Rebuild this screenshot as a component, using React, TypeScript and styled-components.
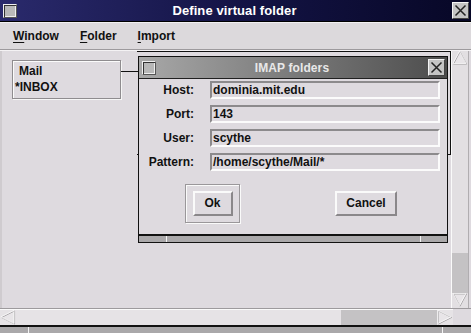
import React from "react";
import styled, { createGlobalStyle } from "styled-components";

const Global = createGlobalStyle`
  html, body {
    margin: 0;
    padding: 0;
    width: 471px;
    height: 333px;
    overflow: hidden;
    background: #dedadf;
  }
  body {
    font-family: "Liberation Sans", Arial, sans-serif;
  }
`;

const Window = styled.div`
  width: 471px;
  height: 333px;
  display: flex;
  flex-direction: column;
  background: #dedadf;
  overflow: hidden;
`;

const TitleBar = styled.div<{ dim?: boolean }>`
  height: 21px;
  flex: none;
  display: flex;
  align-items: center;
  padding: 0 2px 0 3px;
  background: ${(p) =>
    p.dim
      ? "linear-gradient(to right, #a8a8a8, #7a7a7a 50%, #4c4c4c)"
      : "linear-gradient(to right, #2a2a6c, #141446 50%, #070726)"};
  border-bottom: 1px solid ${(p) => (p.dim ? "#202020" : "#000")};
`;

const Title = styled.div<{ dim?: boolean }>`
  flex: 1;
  text-align: center;
  color: ${(p) => (p.dim ? "#e8e8e8" : "#fff")};
  font-weight: bold;
  font-size: ${(p) => (p.dim ? 12 : 13)}px;
  letter-spacing: 0.1px;
`;

const MenuButton = styled.div`
  width: 12px;
  height: 12px;
  border: 1px solid #f0f0f0;
  border-right-color: #555;
  border-bottom-color: #555;
  background: #b8b8b8;
  box-shadow: inset 1px 1px 0 #333, inset -1px -1px 0 #eee;
`;

const CloseBox = styled.div`
  width: 15px;
  height: 15px;
  background: #c4c4c4;
  border: 1px solid #f4f4f4;
  border-right-color: #444;
  border-bottom-color: #444;
  display: flex;
  align-items: center;
  justify-content: center;
`;

const CloseIcon = () => (
  <svg width="13" height="13" viewBox="0 0 13 13">
    <path d="M1.5 1.5 L11.5 11.5 M11.5 1.5 L1.5 11.5" stroke="#222" strokeWidth="1.5" />
  </svg>
);

const MenuBar = styled.div`
  height: 26px;
  flex: none;
  display: flex;
  align-items: center;
  gap: 21px;
  padding-left: 13px;
  background: #dcd9dc;
  border-top: 1px solid #f2f0f2;
  border-bottom: 1px solid #9d9a9d;
  font-size: 12px;
  font-weight: bold;
  color: #111;
`;

const MenuItem = styled.span`
  u {
    text-decoration: underline;
    text-underline-offset: 2px;
  }
`;

const Main = styled.div`
  flex: 1;
  display: flex;
  border-top: 1px solid #f4f2f4;
  padding-right: 2px;
`;

const Canvas = styled.div`
  flex: 1;
  position: relative;
  border-left: 2px solid #cfcbcf;
`;

const FolderNode = styled.div`
  position: absolute;
  left: 10px;
  top: 9px;
  width: 106px;
  height: 35px;
  border: 1px solid #8f8c8f;
  box-shadow: inset 1px 1px 0 #fbfbfb, 1px 1px 0 #f6f6f6;
  padding: 2px 0 0 1px;
  font-size: 12px;
  font-weight: bold;
  color: #111;
`;

const NodeLine = styled.div<{ indent: number }>`
  height: 16px;
  line-height: 16px;
  padding-left: ${(p) => p.indent}px;
`;

const Connector = styled.div`
  position: absolute;
  left: 119px;
  top: 20px;
  width: 17px;
  height: 1px;
  background: #111;
`;

const BackFrame = styled.div`
  position: absolute;
  left: 135px;
  top: 0px;
  width: 313px;
  height: 102px;
  border: 1px solid #111;
  border-left: none;
`;

const Dialog = styled.div`
  position: absolute;
  left: 136px;
  top: 5px;
  width: 308px;
  height: 185px;
  border: 1px solid #111;
  background: #dedadf;
  display: flex;
  flex-direction: column;
`;

const Fields = styled.div`
  display: grid;
  grid-template-columns: 55px 230px;
  column-gap: 16px;
  row-gap: 6px;
  padding-top: 2px;
`;

const Label = styled.div`
  height: 18px;
  line-height: 18px;
  text-align: right;
  font-size: 12px;
  font-weight: bold;
  color: #111;
`;

const Input = styled.div`
  height: 14px;
  line-height: 14px;
  border: 2px solid #8c8a8c;
  border-right-color: #fbfbfb;
  border-bottom-color: #fbfbfb;
  padding-left: 1px;
  font-size: 12px;
  font-weight: bold;
  color: #111;
  white-space: nowrap;
  overflow: hidden;
`;

const Buttons = styled.div`
  display: flex;
  align-items: center;
  justify-content: space-between;
  padding: 0 50px 0 46px;
  margin-top: 13px;
`;

const DefaultRing = styled.div`
  width: 53px;
  height: 37px;
  border: 1px solid #9a979a;
  box-shadow: inset 1px 1px 0 #fafafa, 1px 1px 0 #fafafa;
  display: flex;
  align-items: center;
  justify-content: center;
`;

const Button = styled.div<{ w: number }>`
  width: ${(p) => p.w - 4}px;
  height: 21px;
  line-height: 21px;
  text-align: center;
  border: 2px solid #fafafa;
  border-right-color: #8a878a;
  border-bottom-color: #8a878a;
  font-size: 12px;
  font-weight: bold;
  color: #111;
`;

const Strip = styled.div<{ segs: number[] }>`
  margin-top: auto;
  height: 6px;
  flex: none;
  border-top: 2px solid #111;
  display: grid;
  grid-template-columns: ${(p) => p.segs.map((s) => (s ? `${s}px` : "1fr")).join(" ")};
  gap: 1px;
  background: #f4f4f4;
`;

const StripSeg = styled.div`
  background: #aaa8aa;
`;

const VScroll = styled.div`
  width: 16px;
  flex: none;
  display: flex;
  flex-direction: column;
  border-left: 1px solid #fafafa;
  border-right: 1px solid #b0adb0;
  background: #e2dfe2;
`;

const Trough = styled.div<{ vertical?: boolean }>`
  flex: 1;
  display: flex;
  flex-direction: ${(p) => (p.vertical ? "column" : "row")};
`;

const Thumb = styled.div<{ size: number }>`
  background: #c4c2c4;
  flex: none;
  flex-basis: ${(p) => p.size}px;
`;

const Spacer = styled.div`
  flex: 1;
`;

const HScrollRow = styled.div`
  height: 16px;
  flex: none;
  display: flex;
  border-top: 1px solid #9d9a9d;
  background: #dedadf;
`;

const HScroll = styled.div`
  width: 453px;
  display: flex;
  background: #e6e3e6;
  border-top: 1px solid #fafafa;
`;

const Arrow = ({ dir }: { dir: "up" | "down" | "left" | "right" }) => {
  const pts = {
    up: "8,1 15,14 1,14",
    down: "1,1 15,1 8,14",
    left: "1,8 15,1 15,15",
    right: "1,1 15,8 1,15",
  }[dir];
  return (
    <svg width="16" height="15" viewBox="0 0 16 16" style={{ flex: "none" }}>
      <polygon points={pts} fill="#e8e5e8" stroke="#a3a0a3" strokeWidth="1" />
      <polygon points={pts} fill="none" stroke="#fdfdfd" strokeWidth="1" transform="translate(-0.6,-0.6)" opacity="0.8" />
    </svg>
  );
};

const fields = [
  ["Host:", "dominia.mit.edu"],
  ["Port:", "143"],
  ["User:", "scythe"],
  ["Pattern:", "/home/scythe/Mail/*"],
];

const menus = ["Window", "Folder", "Import"];

export default function App() {
  return (
    <Window>
      <Global />
      <TitleBar>
        <MenuButton />
        <Title>Define virtual folder</Title>
        <CloseBox>
          <CloseIcon />
        </CloseBox>
      </TitleBar>
      <MenuBar>
        {menus.map((m) => (
          <MenuItem key={m}>
            <u>{m[0]}</u>
            {m.slice(1)}
          </MenuItem>
        ))}
      </MenuBar>
      <Main>
        <Canvas>
          <FolderNode>
            <NodeLine indent={5}>Mail</NodeLine>
            <NodeLine indent={1}>*INBOX</NodeLine>
          </FolderNode>
          <Connector />
          <BackFrame />
          <Dialog>
            <TitleBar dim>
              <MenuButton />
              <Title dim>IMAP folders</Title>
              <CloseBox>
                <CloseIcon />
              </CloseBox>
            </TitleBar>
            <Fields>
              {fields.map(([label, value]) => (
                <React.Fragment key={label}>
                  <Label>{label}</Label>
                  <Input>{value}</Input>
                </React.Fragment>
              ))}
            </Fields>
            <Buttons>
              <DefaultRing>
                <Button w={40}>Ok</Button>
              </DefaultRing>
              <Button w={62}>Cancel</Button>
            </Buttons>
            <Strip segs={[27, 0, 26]}>
              <StripSeg />
              <StripSeg />
              <StripSeg />
            </Strip>
          </Dialog>
        </Canvas>
        <VScroll>
          <Arrow dir="up" />
          <Trough vertical>
            <Spacer />
            <Thumb size={40} />
          </Trough>
          <Arrow dir="down" />
        </VScroll>
      </Main>
      <HScrollRow>
        <HScroll>
          <Arrow dir="left" />
          <Trough>
            <Spacer />
            <Thumb size={96} />
          </Trough>
          <Arrow dir="right" />
        </HScroll>
      </HScrollRow>
      <Strip segs={[28, 0, 28]}>
        <StripSeg />
        <StripSeg />
        <StripSeg />
      </Strip>
    </Window>
  );
}
